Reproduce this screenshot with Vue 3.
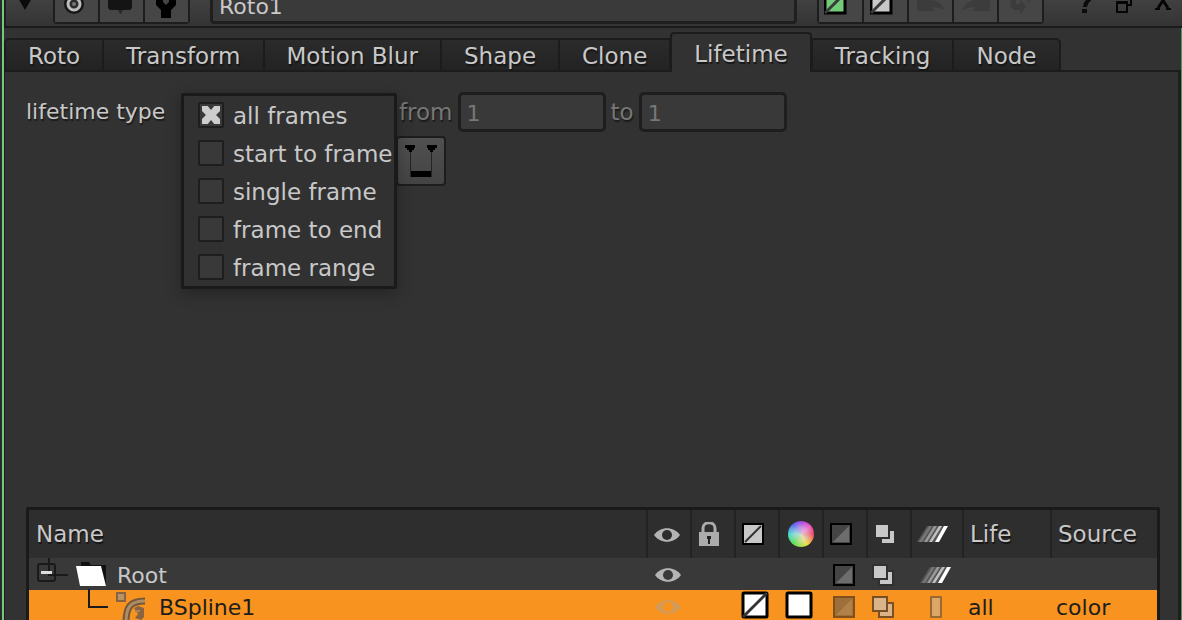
<script setup>
import { ref } from 'vue'

const nodeName = ref('Roto1')
const tabs = ['Roto', 'Transform', 'Motion Blur', 'Shape', 'Clone', 'Lifetime', 'Tracking', 'Node']
const activeTab = ref('Lifetime')

const lifetimeTypes = ['all frames', 'start to frame', 'single frame', 'frame to end', 'frame range']
const lifetimeType = ref('all frames')
const rangeFrom = ref('1')
const rangeTo = ref('1')
</script>

<template>
  <div class="panel">
    <header class="titlebar">
      <button class="plain fold" type="button" aria-label="Collapse panel">
        <svg width="14" height="12" viewBox="0 0 14 12"><path d="M0 0H14L7 12Z" fill="#0b0b0b" /></svg>
      </button>
      <div class="group">
        <button type="button" aria-label="Centre node">
          <svg width="26" height="28" viewBox="0 0 26 28">
            <circle cx="10" cy="14" r="10" fill="#161616" />
            <circle cx="10" cy="14" r="6" fill="#2c2c2c" stroke="#bdbdbd" stroke-width="3" />
            <circle cx="10" cy="14" r="2" fill="#777" />
          </svg>
        </button>
        <button type="button" aria-label="Add comment">
          <svg width="28" height="28" viewBox="0 0 28 28">
            <path d="M2 0H22L24 2V18L22 20H2L0 18V2Z" fill="#141414" />
            <path d="M10 20H15L13 24H12Z" fill="#2a2a2a" />
          </svg>
        </button>
        <button type="button" aria-label="Settings">
          <svg width="22" height="32" viewBox="0 0 22 32">
            <path d="M0 8H20V19L15 24V32H5V24L0 19Z" fill="#000" />
            <path d="M7 8H13V16L10 19L7 16Z" fill="#444" />
          </svg>
        </button>
      </div>
      <input v-model="nodeName" class="name-field" type="text" aria-label="Node name" />
      <div class="group">
        <button type="button" aria-label="Node colour">
          <svg width="34" height="26" viewBox="0 0 34 26">
            <rect x="1" y="1" width="20" height="20" fill="#72cb78" stroke="#000" stroke-width="3" />
            <path d="M1 21L21 1" stroke="#3a3a3a" stroke-width="3" />
          </svg>
        </button>
        <button type="button" aria-label="Outline colour">
          <svg width="32" height="26" viewBox="0 0 32 26">
            <rect x="1" y="1" width="20" height="20" fill="#c8c8c8" stroke="#000" stroke-width="3" />
            <path d="M1 21L21 1" stroke="#3a3a3a" stroke-width="3" />
          </svg>
        </button>
        <button type="button" aria-label="Undo">
          <svg width="28" height="28" viewBox="0 0 28 28"><path d="M0 4L6 10C16 8 25 12 28 21C24 18 20 17 15 17L18 21H0Z" fill="#3c3c3c" /></svg>
        </button>
        <button type="button" aria-label="Redo">
          <svg width="28" height="28" viewBox="0 0 28 28"><path d="M28 4L22 10C12 8 3 12 0 21C4 18 8 17 13 17L10 21H28Z" fill="#3c3c3c" /></svg>
        </button>
        <button type="button" aria-label="Revert">
          <svg width="24" height="30" viewBox="0 0 24 30">
            <path d="M2 8H7V16H11V11L17 19L11 26V22H5L1 18Z" fill="#3c3c3c" />
            <path d="M15 7H23V12L20 15L17 12H15Z" fill="#404040" />
          </svg>
        </button>
      </div>
      <div class="window-buttons">
        <button class="plain" type="button" aria-label="Help">
          <svg width="18" height="25" viewBox="0 0 18 25">
            <path d="M4 6C4 0 15 0 15 6C15 12 9 11 9 18" fill="none" stroke="#0b0b0b" stroke-width="4" />
            <rect x="6" y="20" width="5" height="4" fill="#0b0b0b" />
          </svg>
        </button>
        <button class="plain" type="button" aria-label="Float window">
          <svg width="18" height="24" viewBox="0 0 18 24">
            <path d="M6 10V4H16V15H12" fill="none" stroke="#050505" stroke-width="2" />
            <path d="M2 13H12V22H2Z" fill="none" stroke="#050505" stroke-width="2" />
            <path d="M1 12.500H13M5 4H17" stroke="#050505" stroke-width="3" />
          </svg>
        </button>
        <button class="plain" type="button" aria-label="Close">
          <svg width="18" height="26" viewBox="0 0 18 26">
            <path d="M4 5L14 20M14 5L4 20" stroke="#050505" stroke-width="3" />
            <path d="M1 21H6M12 21H17" stroke="#050505" stroke-width="2" />
          </svg>
        </button>
      </div>
    </header>

    <div class="content">
      <nav class="tabs" role="tablist">
        <button
          v-for="tab in tabs"
          :key="tab"
          type="button"
          role="tab"
          class="tab"
          :class="{ active: tab === activeTab }"
          :aria-selected="tab === activeTab"
          @click="activeTab = tab"
        >{{ tab }}</button>
      </nav>

      <main class="page">
        <div class="fields">
          <span id="type-label" class="type-label">lifetime type</span>
          <div class="chooser">
            <div class="menu" role="radiogroup" aria-labelledby="type-label">
              <label v-for="option in lifetimeTypes" :key="option" class="option">
                <input v-model="lifetimeType" type="radio" name="lifetime" :value="option" />
                <span>{{ option }}</span>
              </label>
            </div>
          </div>
          <div class="range">
            <label class="dim" for="range-from">from</label>
            <input id="range-from" v-model="rangeFrom" type="text" disabled />
            <label class="dim" for="range-to">to</label>
            <input id="range-to" v-model="rangeTo" type="text" disabled />
          </div>
          <button class="tool" type="button" aria-label="Set frame range">
            <svg width="32" height="32" viewBox="0 0 32 32">
              <path d="M0 0H10V3H9V5H7V7H4V5H2V3H0ZM22 0H32V3H30V5H28V7H25V5H23V3H22Z" fill="#000" />
              <path d="M5.500 7V32M26.500 7V32" stroke="#242424" stroke-width="1" />
              <rect x="6" y="26" width="20" height="6" fill="#000" />
            </svg>
          </button>
        </div>

        <table class="layers">
          <colgroup>
            <col />
            <col v-for="n in 6" :key="n" class="c-icon" />
            <col class="c-blur" />
            <col class="c-life" />
            <col class="c-source" />
          </colgroup>
          <thead>
            <tr>
              <th class="name">Name</th>
              <th class="icon eye-cell" aria-label="Visible">
                <svg width="26" height="14" viewBox="0 0 26 14">
                  <path d="M0 7C6 -2 20 -2 26 7C20 16 6 16 0 7Z" fill="#b4b4b4" /><circle cx="13" cy="7" r="5" fill="#2e2e2e" />
                </svg>
              </th>
              <th class="icon" aria-label="Locked">
                <svg width="20" height="24" viewBox="0 0 20 24">
                  <path d="M4 12V6C4 -1 16 -1 16 6V12" fill="none" stroke="#acacac" stroke-width="3" />
                  <rect y="10" width="20" height="14" fill="#acacac" />
                  <path d="M8 14H12V17H11V22H9V17H8Z" fill="#222" />
                </svg>
              </th>
              <th class="icon" aria-label="Overlay">
                <svg width="22" height="22" viewBox="0 0 22 22">
                  <rect x="1" y="1" width="20" height="20" fill="#c8c8c8" stroke="#000" stroke-width="2" />
                  <path d="M3 19L19 3" stroke="#303030" stroke-width="2" />
                </svg>
              </th>
              <th class="icon wheel-cell" aria-label="Colour"><span class="wheel"></span></th>
              <th class="icon" aria-label="Invert">
                <svg width="22" height="22" viewBox="0 0 22 22">
                  <rect x="1" y="1" width="20" height="20" fill="#454545" stroke="#000" stroke-width="2" />
                  <path d="M3 19L19 3V19Z" fill="#6d6d6d" />
                </svg>
              </th>
              <th class="icon" aria-label="Blending">
                <svg width="18" height="18" viewBox="0 0 18 18">
                  <path d="M14 6H18V18H6V14H14Z" fill="#c8c8c8" /><rect width="12" height="12" fill="#c8c8c8" />
                </svg>
              </th>
              <th class="icon" aria-label="Motion blur">
                <svg width="32" height="18" viewBox="0 0 32 18">
                  <path d="M10 1H30L20 17H0Z" fill="#555" />
                  <path d="M12 1H15L5 17H2Z" fill="#777" /><path d="M17 1H20L10 17H7Z" fill="#999" />
                  <path d="M22 1H25L15 17H12Z" fill="#c0c0c0" /><path d="M27 1H31L22 17H18Z" fill="#fff" />
                </svg>
              </th>
              <th>Life</th>
              <th>Source</th>
            </tr>
          </thead>
          <tbody>
            <tr class="root">
              <td class="name">
                <div class="tree">
                  <button class="plain expander" type="button" aria-label="Collapse Root">
                    <svg width="40" height="32" viewBox="0 0 40 32">
                      <path d="M20 0V17H39" stroke="#1a1a1a" stroke-width="2" fill="none" />
                      <rect x="9" y="6" width="17" height="17" rx="2" fill="none" stroke="#1a1a1a" stroke-width="2" />
                      <path d="M12 14.500H23" stroke="#ddd" stroke-width="3" />
                    </svg>
                  </button>
                  <svg class="folder" width="31" height="26" viewBox="0 0 31 26">
                    <path d="M5 1H13L15 4H30V25H6Z" fill="#111" />
                    <path d="M0 5H25L30 25H4Z" fill="#fff" />
                  </svg>
                  <span>Root</span>
                </div>
              </td>
              <td class="icon">
                <svg width="26" height="14" viewBox="0 0 26 14">
                  <path d="M0 7C6 -2 20 -2 26 7C20 16 6 16 0 7Z" fill="#b4b4b4" /><circle cx="13" cy="7" r="5" fill="#393939" />
                </svg>
              </td>
              <td></td>
              <td></td>
              <td></td>
              <td class="icon">
                <svg width="22" height="22" viewBox="0 0 22 22">
                  <rect x="1" y="1" width="20" height="20" fill="#454545" stroke="#000" stroke-width="2" />
                  <path d="M3 19L19 3V19Z" fill="#6d6d6d" />
                </svg>
              </td>
              <td class="icon blend">
                <svg width="22" height="22" viewBox="0 0 22 22">
                  <rect x="7" y="7" width="14" height="14" fill="#c8c8c8" stroke="#303030" stroke-width="2" />
                  <rect x="1" y="1" width="14" height="14" fill="#c8c8c8" stroke="#303030" stroke-width="2" />
                </svg>
              </td>
              <td class="icon">
                <svg width="32" height="18" viewBox="0 0 32 18">
                  <path d="M10 1H30L20 17H0Z" fill="#555" />
                  <path d="M12 1H15L5 17H2Z" fill="#777" /><path d="M17 1H20L10 17H7Z" fill="#999" />
                  <path d="M22 1H25L15 17H12Z" fill="#c0c0c0" /><path d="M27 1H31L22 17H18Z" fill="#fff" />
                </svg>
              </td>
              <td></td>
              <td></td>
            </tr>
            <tr class="selected">
              <td class="name">
                <div class="tree">
                  <svg width="120" height="34" viewBox="0 0 120 34">
                    <path d="M60 0V18H79" stroke="#1a1a1a" stroke-width="2" fill="none" />
                    <rect x="88" y="4" width="8" height="8" fill="#bb9266" stroke="#876341" stroke-width="2" />
                    <path d="M97 34C97 18 101 12 116 12" fill="none" stroke="#73583c" stroke-width="7" />
                    <path d="M97 34C97 18 101 12 116 12" fill="none" stroke="#b08c66" stroke-width="3" />
                    <path d="M105 19L109 17L115 19V28L112 31L106 29L109 25Z" fill="#8a6441" />
                    <path d="M106 22H111" stroke="#a88460" stroke-width="2" />
                  </svg>
                  <span>BSpline1</span>
                </div>
              </td>
              <td class="icon">
                <svg width="26" height="14" viewBox="0 0 26 14">
                  <path d="M0 7C6 -2 20 -2 26 7C20 16 6 16 0 7Z" fill="#d39a58" /><circle cx="13" cy="7" r="5" fill="#f7931e" />
                </svg>
              </td>
              <td></td>
              <td class="icon swatch">
                <svg width="28" height="28" viewBox="0 0 28 28">
                  <rect x="2" y="2" width="24" height="24" rx="1" fill="#fff" stroke="#000" stroke-width="3" />
                  <path d="M2 26L26 2" stroke="#333" stroke-width="3" />
                </svg>
              </td>
              <td class="icon swatch">
                <svg width="28" height="28" viewBox="0 0 28 28">
                  <rect x="2" y="2" width="24" height="24" rx="1" fill="#fff" stroke="#000" stroke-width="3" />
                </svg>
              </td>
              <td class="icon">
                <svg width="22" height="22" viewBox="0 0 22 22">
                  <rect x="1" y="1" width="20" height="20" fill="#9c6f3b" stroke="#83501a" stroke-width="2" />
                  <path d="M3 19L19 3V19Z" fill="#b28147" />
                </svg>
              </td>
              <td class="icon blend">
                <svg width="22" height="22" viewBox="0 0 22 22">
                  <rect x="7" y="7" width="14" height="14" fill="#d9b48a" stroke="#7a5022" stroke-width="2" />
                  <rect x="1" y="1" width="14" height="14" fill="#d9b48a" stroke="#7a5022" stroke-width="2" />
                </svg>
              </td>
              <td class="icon">
                <svg width="12" height="22" viewBox="0 0 12 22">
                  <rect x="1" y="1" width="10" height="20" fill="#dba768" stroke="#9a6a30" stroke-width="2" />
                </svg>
              </td>
              <td>all</td>
              <td>color</td>
            </tr>
          </tbody>
        </table>
      </main>
    </div>
  </div>
</template>

<style>
body {
  background: #2a2a2a;
}
</style>

<style scoped>
.panel {
  box-sizing: border-box;
  display: flex;
  flex-direction: column;
  height: 100vh;
  margin-left: 2px;
  border-left: 2px solid #72cb78;
  background: #323232;
  color: #c8c8c8;
  font: 22px/28px "DejaVu Sans", Verdana, sans-serif;
  overflow: hidden;
}
.panel * {
  box-sizing: border-box;
}
svg {
  display: block;
  flex: none;
}
button,
input {
  margin: 0;
  padding: 0;
  border: 0;
  border-radius: 0;
  color: inherit;
  font: inherit;
}
.plain {
  background: none;
}

.titlebar {
  display: flex;
  align-items: flex-end;
  flex: none;
  height: 28px;
  border-bottom: 2px solid #1b1b1b;
  border-left: 2px solid #1f1f1f;
  background: linear-gradient(#414141, #343434);
  overflow: hidden;
}
.fold {
  margin: 0 21px 16px 12px;
}
.group {
  display: flex;
  flex: none;
  margin-bottom: 2px;
  border: 2px solid #1d1d1d;
  border-radius: 4px;
  background: #1d1d1d;
  gap: 2px;
}
.group button {
  display: flex;
  align-items: flex-end;
  justify-content: center;
  width: 43px;
  height: 44px;
  padding-bottom: 4px;
  background: #464646;
}
.name-field {
  flex: 1;
  min-width: 0;
  height: 44px;
  margin: 0 20px 2px;
  padding: 8px 6px 0;
  border: 3px solid #1f1f1f;
  border-radius: 4px;
  background: #3a3a3a;
}
.window-buttons {
  display: flex;
  align-items: flex-end;
  gap: 21px;
  margin: 0 10px 12px 32px;
}

.content {
  display: flex;
  flex: 1;
  flex-direction: column;
  min-height: 0;
  padding-top: 4px;
  border-right: 1px solid #57925b;
}
.tabs {
  display: flex;
  align-items: flex-end;
  flex: none;
  height: 40px;
  box-shadow: inset 0 -2px #1d1d1d;
}
.tab {
  height: 34px;
  padding: 0 22px;
  border: solid #1c1c1c;
  border-width: 2px 1px;
  background: linear-gradient(#2b2b2b, #232323);
  font-size: 23px;
  line-height: 32px;
  text-shadow: 1px 2px 1px #151515;
}
.tab:first-child {
  border-left-width: 2px;
  border-radius: 5px 0 0;
}
.tab:last-child {
  border-right-width: 2px;
  border-radius: 0 5px 0 0;
}
.tab.active {
  height: 40px;
  border-width: 2px 2px 0;
  border-radius: 4px 4px 0 0;
  background: #323232;
  line-height: 40px;
}

.page {
  display: flex;
  flex: 1;
  flex-direction: column;
  min-height: 0;
  padding: 20px 18px 0 21px;
  border: solid #1f1f1f;
  border-width: 0 3px 0 1px;
}
.fields {
  display: grid;
  grid-template-columns: 155px 212px 1fr;
  grid-template-rows: 40px 50px;
  row-gap: 4px;
  flex: none;
  height: 415px;
  align-items: center;
  text-shadow: 1px 2px 1px #1a1a1a;
}
.type-label {
  white-space: nowrap;
}
.chooser {
  position: relative;
  align-self: start;
}
.menu {
  position: absolute;
  top: 1px;
  left: 0;
  z-index: 1;
  width: 216px;
  border: 3px solid #1a1a1a;
  border-radius: 2px;
  background: #313131;
  box-shadow: 0 4px 16px rgb(0 0 0 / 30%);
  font-size: 23px;
  text-shadow: none;
}
.option {
  display: flex;
  align-items: center;
  gap: 9px;
  height: 38px;
  padding-left: 14px;
  white-space: nowrap;
}
.option input {
  display: grid;
  place-items: center;
  flex: none;
  width: 26px;
  height: 26px;
  border: 2px solid #1e1e1e;
  border-radius: 2px;
  background: #393939;
  appearance: none;
}
.option input:checked::after {
  width: 18px;
  height: 18px;
  background: #cdcdcd;
  clip-path: polygon(0 0, 32% 0, 50% 22%, 68% 0, 100% 0, 100% 28%, 78% 50%, 100% 72%, 100% 100%, 68% 100%, 50% 78%, 32% 100%, 0 100%, 0 72%, 22% 50%, 0 28%);
  content: "";
}
.option span {
  padding-top: 1px;
}
.range {
  display: flex;
  align-items: center;
  gap: 5px;
  padding-left: 6px;
}
.dim {
  color: #777;
  font-size: 23px;
}
.range input {
  width: 148px;
  height: 40px;
  padding: 2px 6px 0;
  border: 3px solid #1e1e1e;
  border-radius: 5px;
  background: #393939;
  color: #777;
}
.tool {
  display: flex;
  align-items: center;
  justify-content: center;
  grid-column: 3;
  width: 50px;
  height: 50px;
  margin-left: 3px;
  border: 2px solid #1d1d1d;
  border-radius: 4px;
  background: linear-gradient(#505050, #444);
}

.layers {
  width: 100%;
  border: 3px solid #1a1a1a;
  border-bottom: 0;
  border-spacing: 0;
  border-radius: 3px 3px 0 0;
  table-layout: fixed;
}
.c-icon {
  width: 44px;
}
.c-blur {
  width: 52px;
}
.c-life {
  width: 88px;
}
.c-source {
  width: 107px;
}
th,
td {
  padding: 0 0 0 6px;
  text-align: left;
  vertical-align: middle;
  white-space: nowrap;
}
th {
  height: 48px;
  border-left: 2px solid #232323;
  background: #2e2e2e;
  font-size: 23px;
  font-weight: 400;
  text-shadow: 1px 2px 1px #151515;
}
td {
  height: 32px;
  padding-top: 3px;
}
th.name {
  padding-left: 7px;
  border-left: 0;
}
td.name {
  padding: 0;
}
th.icon {
  padding: 0 8px 0 0;
}
th.eye-cell {
  padding: 2px 4px 0 0;
}
th.wheel-cell {
  padding: 0;
}
td.icon {
  padding: 2px 0 0;
}
td.blend {
  padding-right: 10px;
}
.icon svg,
.wheel {
  margin: 0 auto;
}
.wheel {
  display: block;
  width: 26px;
  height: 26px;
  border-radius: 50%;
  background:
    radial-gradient(rgb(225 225 225 / 80%) 0, rgb(225 225 225 / 50%) 35%, transparent 70%),
    conic-gradient(#a040e8, #f050c0 50deg, #f04060 90deg, #f0e040 150deg, #50e050 220deg, #40d8d0 270deg, #5060f0 320deg, #a040e8);
}
.root td {
  background: #393939;
}
.selected td {
  background: #f7931e;
  color: #1d1d1d;
}
td.swatch {
  padding: 0 2px 3px 0;
}
.tree {
  display: flex;
  align-items: center;
  height: 32px;
}
.tree span {
  padding: 4px 0 0 10px;
}
.folder {
  margin-left: 7px;
}
</style>
